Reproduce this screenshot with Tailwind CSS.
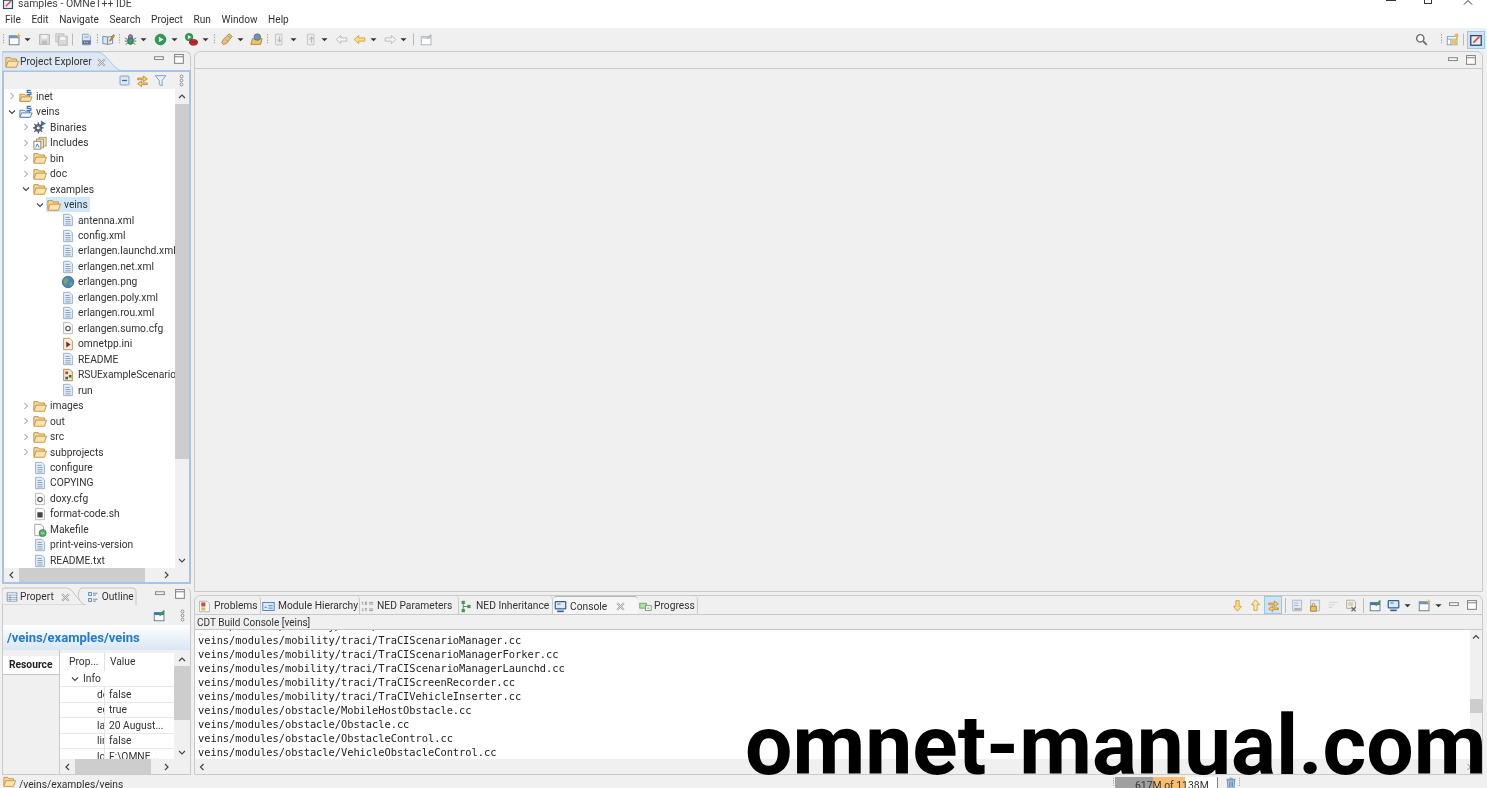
<!DOCTYPE html>
<html lang="en">
  <head>
    <meta charset="UTF-8" />
    <script src="https://cdn.jsdelivr.net/npm/@tailwindcss/browser@4"></script>
    <title>samples - OMNeT++ IDE</title>
  </head>
  <body class="w-[1487px] h-[788px] overflow-hidden bg-[#f0f0f0] font-['Roboto',sans-serif] text-[10.25px] text-[#333] relative blur-[0.35px]">
    <!-- icon sheet -->
    <svg class="hidden">
      <symbol id="folder" viewBox="0 0 16 16"><path d="M1 13V3h5l1 1.500h6V7" fill="#f8d795" stroke="#bb8838"/><path d="M1 14l2.500-7H15.500L13 14z" fill="#fce3ad" stroke="#c28c35"/></symbol>
      <symbol id="project" viewBox="0 0 16 16"><path d="M1 14V6h5l1 1h5v7z" fill="#f8d795" stroke="#bb8838"/><path d="M1 14l2-5h12l-2 5z" fill="#fce3ad" stroke="#c28c35"/><path d="M13.500 1.500H9.500v2.500h4v2.500H9" fill="none" stroke="#3d79c2" stroke-width="1.500"/></symbol>
      <symbol id="projopen" viewBox="0 0 16 16"><path d="M1 14V6h5l1 1h5v7z" fill="#dfe9f5" stroke="#4f7bab"/><path d="M1 14l2-5h12l-2 5z" fill="#f2f6fb" stroke="#4f7bab"/><path d="M13.500 1.500H9.500v2.500h4v2.500H9" fill="none" stroke="#3d79c2" stroke-width="1.500"/></symbol>
      <symbol id="binaries" viewBox="0 0 16 16"><path d="M9 0.500l6 3.500-6 3.500z" fill="#3f7cc4"/><circle cx="6" cy="9" r="4" fill="#8d9aa8" stroke="#4a5662"/><path d="M6 2.500v13M0 9h12M1.500 4.500l9 9M10.500 4.500l-9 9" stroke="#4a5662" stroke-width="1.300"/><circle cx="6" cy="9" r="1.700" fill="#fff"/></symbol>
      <symbol id="includes" viewBox="0 0 16 16"><rect x="7" y="1.500" width="8" height="10" fill="#efe2c4" stroke="#a4925f"/><rect x="4" y="3.500" width="8" height="10" fill="#efe2c4" stroke="#a4925f"/><rect x="1" y="6" width="8" height="9" fill="#fff" stroke="#7e7e6e"/><path d="M3 13l2-4 2 4" fill="none" stroke="#2f6cb8"/></symbol>
      <symbol id="file" viewBox="0 0 16 16"><path d="M3 1.500h7l3 3v10H3z" fill="#e9f0f9" stroke="#8ea7c6"/><path d="M5 5h5M5 7.500h6M5 10h6M5 12.500h6" stroke="#6f92bd"/></symbol>
      <symbol id="cfg" viewBox="0 0 16 16"><path d="M3 1.500h7l3 3v10H3z" fill="#fbfbfb" stroke="#b0b0b0"/><circle cx="8" cy="8.500" r="2.500" fill="#fff" stroke="#555" stroke-width="1.400"/></symbol>
      <symbol id="globe" viewBox="0 0 16 16"><circle cx="8" cy="8" r="6.500" fill="#4c86b8" stroke="#3a6a92"/><path d="M3 6c2-3 4-3 5-1s-1 3-2 5-3 0-3-4zM10 9c2-1 3 0 3 1s-2 3-3 2z" fill="#7fa565"/></symbol>
      <symbol id="ini" viewBox="0 0 16 16"><path d="M3 1.500h7l3 3v10H3z" fill="#fbf1d8" stroke="#b08f50"/><path d="M6 5l5 3.500L6 12z" fill="#8a1f2a"/></symbol>
      <symbol id="ned" viewBox="0 0 16 16"><path d="M3 1.500h7l3 3v10H3z" fill="#f7e6c4" stroke="#a5854a"/><rect x="5" y="4" width="3" height="3" fill="#c33"/><rect x="9" y="8" width="3" height="3" fill="#2c7a3c"/><rect x="5" y="10" width="3" height="3" fill="#2a5ba5"/></symbol>
      <symbol id="sh" viewBox="0 0 16 16"><path d="M3 1.500h8l2 2v11H3z" fill="#fff" stroke="#b0b0b0"/><rect x="5" y="6" width="6" height="6" fill="#444"/></symbol>
      <symbol id="make" viewBox="0 0 16 16"><path d="M2 1.500h7l3 3v10H2z" fill="#fff" stroke="#9a9a9a"/><circle cx="11" cy="11.500" r="4" fill="#5cae6c" stroke="#3f7f4d"/><path d="M9 11.500h4" stroke="#d9f0dd"/></symbol>
      <symbol id="chevr" viewBox="0 0 8 8"><path d="M2.500 1l3 3-3 3" fill="none" stroke="#8a8a8a"/></symbol>
      <symbol id="chevd" viewBox="0 0 8 8"><path d="M1 2.500l3 3 3-3" fill="none" stroke="#444" stroke-width="1.100"/></symbol>
      <symbol id="chevu" viewBox="0 0 8 8"><path d="M1 5.500l3-3 3 3" fill="none" stroke="#444" stroke-width="1.200"/></symbol>
      <symbol id="chevl" viewBox="0 0 8 8"><path d="M5.500 1l-3 3 3 3" fill="none" stroke="#444" stroke-width="1.200"/></symbol>
      <symbol id="chevrd" viewBox="0 0 8 8"><path d="M2.500 1l3 3-3 3" fill="none" stroke="#444" stroke-width="1.200"/></symbol>
      <symbol id="arrow" viewBox="0 0 8 8"><path d="M0.500 2.500h7L4 6z" fill="#333"/></symbol>
      <symbol id="grip" viewBox="0 0 4 16"><path d="M2 1v14" stroke="#9a9a9a" stroke-width="1.500" stroke-dasharray="1.500 2"/></symbol>
      <symbol id="sep" viewBox="0 0 4 16"><path d="M2 0v16" stroke="#a8a8a8"/></symbol>
      <symbol id="newf" viewBox="0 0 16 16"><rect x="1.500" y="3.500" width="12" height="11" fill="#fff" stroke="#44698f"/><rect x="1.500" y="3.500" width="12" height="3" fill="#6f95bf"/><path d="M13 0l1 2 2 1-2 1-1 2-1-2-2-1 2-1z" fill="#e9b84b"/></symbol>
      <symbol id="save" viewBox="0 0 16 16"><rect x="2" y="2" width="12" height="12" fill="#d8d8d8" stroke="#b2b2b2"/><rect x="4.500" y="2.500" width="7" height="4.500" fill="#f4f4f4"/><rect x="5" y="9.500" width="6" height="4" fill="#bdbdbd"/></symbol>
      <symbol id="saveall" viewBox="0 0 16 16"><rect x="1" y="1" width="10" height="10" fill="#ddd" stroke="#b8b8b8"/><rect x="4" y="4" width="11" height="11" fill="#d8d8d8" stroke="#b2b2b2"/><rect x="6.500" y="4.500" width="6" height="4" fill="#f4f4f4"/></symbol>
      <symbol id="print" viewBox="0 0 16 16"><path d="M3 1.500h7l3 3v10H3z" fill="#dfe7f2" stroke="#7e94b4"/><rect x="3" y="9" width="10" height="5" fill="#5a7498"/><path d="M5 5h6" stroke="#7e94b4"/><path d="M5 11.500h6" stroke="#fff" stroke-dasharray="1 1"/></symbol>
      <symbol id="book" viewBox="0 0 16 16"><path d="M1 4l6 1v9l-6-1z" fill="#dbe6f2" stroke="#5d7ea5"/><path d="M7 5l6-1v9l-6 1z" fill="#eef3f9" stroke="#5d7ea5"/><path d="M10 8l4-6 1.500 1-4 6-2 1z" fill="#d9a441" stroke="#8c6a25"/></symbol>
      <symbol id="bug" viewBox="0 0 16 16"><ellipse cx="8" cy="9.500" rx="3.500" ry="4.500" fill="#3d9a6a" stroke="#24613f"/><circle cx="8" cy="4.500" r="2.500" fill="#8f7ab5" stroke="#5f4f85"/><path d="M1 6l3 2M15 6l-3 2M1 10h3M15 10h-3M2 14l3-2M14 14l-3-2" stroke="#3a5f4a"/></symbol>
      <symbol id="run" viewBox="0 0 16 16"><circle cx="8" cy="8" r="6.500" fill="#2f9e50" stroke="#1d7a3a"/><path d="M6 4.500l5.500 3.500L6 11.500z" fill="#fff"/></symbol>
      <symbol id="runext" viewBox="0 0 16 16"><circle cx="5" cy="5" r="4.500" fill="#2f9e50" stroke="#1d7a3a"/><path d="M3.500 2.500l4 2.500-4 2.500z" fill="#fff"/><ellipse cx="10.500" cy="11.500" rx="5" ry="3.500" fill="#c62b2b" stroke="#8a1f1f"/><path d="M7 11h7" stroke="#500" stroke-dasharray="1 1"/></symbol>
      <symbol id="brush" viewBox="0 0 16 16"><path d="M11 1l4 3-7 9-4 1-2-2 2-4z" fill="#ecc27a" stroke="#a67c34"/><path d="M10 4l3 2M7 8l3 2" stroke="#7f8fa6"/></symbol>
      <symbol id="openr" viewBox="0 0 16 16"><path d="M1 14l2-7h12l-2 7z" fill="#f0c365" stroke="#a77d2d"/><circle cx="9" cy="5" r="4" fill="#7a8fb8" stroke="#566b94"/><circle cx="12" cy="6" r="1.500" fill="#5ba05b"/></symbol>
      <symbol id="nextann" viewBox="0 0 16 16"><path d="M3 1.500h8v13H3z" fill="#ececec" stroke="#bdbdbd"/><path d="M8 4v6M5.500 8L8 11l2.500-3" fill="none" stroke="#b8b8b8" stroke-width="1.300"/></symbol>
      <symbol id="prevann" viewBox="0 0 16 16"><path d="M3 1.500h8v13H3z" fill="#ececec" stroke="#bdbdbd"/><path d="M8 12V6M5.500 8L8 5l2.500 3" fill="none" stroke="#b8b8b8" stroke-width="1.300"/></symbol>
      <symbol id="backg" viewBox="0 0 16 16"><path d="M1.500 8L7 3v3h7.500v4H7v3z" fill="#f4f4f4" stroke="#b4b4b4"/></symbol>
      <symbol id="lefto" viewBox="0 0 16 16"><path d="M1.500 8L7 3v3h7.500v4H7v3z" fill="#fbdc8e" stroke="#cf9a2f"/></symbol>
      <symbol id="rightg" viewBox="0 0 16 16"><path d="M14.500 8L9 3v3H1.500v4H9v3z" fill="#f4f4f4" stroke="#b4b4b4"/></symbol>
      <symbol id="pin" viewBox="0 0 16 16"><rect x="1.500" y="4.500" width="12" height="10" fill="#fff" stroke="#9aa4b0"/><rect x="1.500" y="4.500" width="12" height="2.500" fill="#c8ccd2"/><path d="M9 7l5-5" stroke="#b8b8b8" stroke-width="2"/></symbol>
      <symbol id="pinb" viewBox="0 0 16 16"><rect x="1.500" y="4.500" width="12" height="10" fill="#fff" stroke="#44698f"/><rect x="1.500" y="4.500" width="12" height="3" fill="#3f74ad"/><path d="M8 8l6-6" stroke="#3f9a4f" stroke-width="2.200"/></symbol>
      <symbol id="search" viewBox="0 0 16 16"><circle cx="6.500" cy="6.500" r="4.500" fill="#fff" stroke="#6b6b6b" stroke-width="1.700"/><path d="M10 10l4.500 4.500" stroke="#6b6b6b" stroke-width="2.200"/></symbol>
      <symbol id="persp" viewBox="0 0 16 16"><rect x="1.500" y="4.500" width="12" height="10" fill="#fff" stroke="#6f8fb3"/><path d="M1.500 7.500h12M6 7.500v7" stroke="#6f8fb3"/><rect x="6.500" y="8" width="7" height="6" fill="#eac36e"/><circle cx="13" cy="3" r="2.500" fill="#e9b84b"/></symbol>
      <symbol id="omnet" viewBox="0 0 16 16"><rect x="2" y="3" width="12" height="11" fill="#e8eef6" stroke="#2f4a6d" stroke-width="1.500"/><path d="M5 11l7-7" stroke="#df4a32" stroke-width="2"/></symbol>
      <symbol id="collapse" viewBox="0 0 16 16"><rect x="2.500" y="2.500" width="11" height="11" rx="1" fill="#dbe7f5" stroke="#6b93c0"/><path d="M5 8h6" stroke="#34659c" stroke-width="1.500"/></symbol>
      <symbol id="link" viewBox="0 0 16 16"><path d="M2 5h7V2.500L14 6l-5 3.500V7H2z" fill="#f5cd72" stroke="#bd8a25"/><path d="M14 11H7V8.500L2 12l5 3.500V13h7z" fill="#f5cd72" stroke="#bd8a25"/></symbol>
      <symbol id="filter" viewBox="0 0 16 16"><path d="M1.500 2h13L10 8v6.500L6.500 13V8z" fill="#e6f0fa" stroke="#6b93c0"/></symbol>
      <symbol id="dots" viewBox="0 0 6 16"><circle cx="3" cy="3" r="1.700" fill="#fff" stroke="#777"/><circle cx="3" cy="8" r="1.700" fill="#fff" stroke="#777"/><circle cx="3" cy="13" r="1.700" fill="#fff" stroke="#777"/></symbol>
      <symbol id="min" viewBox="0 0 10 10"><rect x="0.500" y="2.500" width="8" height="2.500" fill="#fff" stroke="#8a8a8a"/></symbol>
      <symbol id="max" viewBox="0 0 10 10"><rect x="0.500" y="0.500" width="8" height="8" fill="#fff" stroke="#8a8a8a"/><path d="M0.500 2.500h8" stroke="#8a8a8a"/></symbol>
      <symbol id="close" viewBox="0 0 8 8"><path d="M1 1l6 6M7 1L1 7" stroke="#9a9a9a" stroke-width="1.800"/><path d="M1 1l6 6M7 1L1 7" stroke="#fff" stroke-width="0.600"/></symbol>
      <symbol id="table" viewBox="0 0 16 16"><rect x="1.500" y="2.500" width="13" height="11" fill="#fff" stroke="#6b89ab"/><path d="M1.500 5.500h13M5.500 5.500v8M1.500 8.500h13M1.500 11h13" stroke="#6b89ab"/></symbol>
      <symbol id="outline" viewBox="0 0 16 16"><path d="M2 2h4v4H2zM2 10h4v4H2z" fill="#dce8f5" stroke="#3b73b3"/><path d="M8 3h6M8 5.500h4M8 11h6M8 13.500h4" stroke="#3b73b3"/></symbol>
      <symbol id="problems" viewBox="0 0 16 16"><path d="M2 1.500h9l3 3v10H2z" fill="#fff" stroke="#a5a5a5"/><rect x="4" y="3" width="5" height="5" fill="#d9483b"/><rect x="4" y="9" width="5" height="4" fill="#e9b84b"/></symbol>
      <symbol id="hier" viewBox="0 0 16 16"><rect x="1" y="3" width="14" height="10" fill="#dbe8f5" stroke="#3b73b3"/><path d="M3 9h3M8 7h5M8 10h5" stroke="#3b73b3"/></symbol>
      <symbol id="nedpar" viewBox="0 0 16 16"><path d="M1 3h2M1 5h2M5 2l2 4M7 2L5 6M1 11h2M1 13h2M5 10l1 2 1-2M6 12v2M10 3h5M10 5h5M10 11h5M10 13h5" fill="none" stroke="#8a8a8a"/></symbol>
      <symbol id="inherit" viewBox="0 0 16 16"><rect x="2" y="1" width="4" height="4" fill="#3f9a4f"/><rect x="9" y="6" width="4" height="4" fill="#3f9a4f"/><rect x="2" y="11" width="4" height="4" fill="#3f9a4f"/><path d="M4 5v6M4 8h5" stroke="#3f7a4f"/></symbol>
      <symbol id="console" viewBox="0 0 16 16"><rect x="1.500" y="2" width="13" height="9" rx="1" fill="#dfe9f5" stroke="#2e5f9a" stroke-width="1.500"/><path d="M4 14h8" stroke="#2e5f9a" stroke-width="2"/><path d="M4 5h4" stroke="#2e5f9a"/></symbol>
      <symbol id="progress" viewBox="0 0 16 16"><rect x="1" y="4" width="8" height="6" fill="#b9dbb4" stroke="#5c9a55"/><rect x="8" y="7" width="7" height="6" fill="#fff" stroke="#5c9a55"/><path d="M10 10h3" stroke="#5c9a55"/></symbol>
      <symbol id="downo" viewBox="0 0 16 16"><path d="M8 15L3 9h3V2h4v7h3z" fill="#fbdc8e" stroke="#cf9a2f"/></symbol>
      <symbol id="upo" viewBox="0 0 16 16"><path d="M8 1L3 7h3v7h4V7h3z" fill="#fde8b0" stroke="#cf9a2f"/></symbol>
      <symbol id="clear" viewBox="0 0 16 16"><path d="M2 1.500h11v13H2z" fill="#e3eaf3" stroke="#a4b3c6"/><path d="M4 5h5M4 8h5" stroke="#98a9bf"/><path d="M4 11h8v3H4z" fill="#aab3bf"/></symbol>
      <symbol id="lock" viewBox="0 0 16 16"><path d="M2 1.500h11v13H2z" fill="#e3eaf3" stroke="#a4b3c6"/><rect x="2" y="9" width="7" height="6" fill="#e8c06c" stroke="#a87f2c"/><path d="M4 9V7a1.500 1.500 0 0 1 3 0v2" fill="none" stroke="#a87f2c"/></symbol>
      <symbol id="wrap" viewBox="0 0 16 16"><path d="M2 4h12M2 7h8M2 10h5" stroke="#d0d5dc" stroke-width="1.300"/></symbol>
      <symbol id="rem" viewBox="0 0 16 16"><path d="M2 1.500h9l2 2v8H2z" fill="#f4efe0" stroke="#a4a08e"/><path d="M4 5h6M4 7.500h6" stroke="#a4a08e"/><path d="M8 10l5 5M13 10l-5 5" stroke="#666" stroke-width="1.600"/></symbol>
      <symbol id="trash" viewBox="0 0 16 16"><path d="M3 4h10l-1 11H4z" fill="#b9cde6" stroke="#4c78ad"/><path d="M2 3h12M6 1.500h4M6 6v7M8 6v7M10 6v7" stroke="#4c78ad"/></symbol>
    </svg>

    <!-- title bar and menu -->
    <div class="h-[7px] flex items-center pl-[2px] bg-white">
      <svg class="w-[12px] h-[12px] shrink-0"><use href="#omnet" /></svg>
      <span class="ml-[4px] text-[10.5px] text-[#444] whitespace-nowrap">samples - OMNeT++ IDE</span>
      <span class="absolute left-[1386px] top-0 w-[10px] h-px bg-[#333]"></span>
      <span class="absolute left-[1424px] top-0 w-[8px] h-[4px] border-x border-b border-[#333]"></span>
      <svg class="absolute left-[1463px] top-0 w-[10px] h-[5px]" viewBox="0 0 10 5"><path d="M1 4.500L5 0.500 9 4.500" fill="none" stroke="#333"/></svg>
    </div>
    <div class="h-[21px] pt-[5px] bg-white flex items-center pl-[5px] gap-[10.6px] text-[10.1px] text-[#333]">
      <span>File</span><span>Edit</span><span>Navigate</span><span>Search</span><span>Project</span><span>Run</span><span>Window</span><span>Help</span>
    </div>

    <!-- main toolbar -->
    <div id="toolbar" class="h-[23px] flex items-center"></div>

    <div class="flex h-[724px]">
      <!-- left column -->
      <div class="w-[194px] shrink-0 pl-[2px] pr-[3px] flex flex-col gap-[3px]">
        <!-- project explorer -->
        <section class="h-[533px] flex flex-col">
          <div class="h-[19px] relative flex items-center pt-[2px] rounded-tr-[6px] border-t border-r border-[#c9c9c9]">
            <svg class="absolute left-0 top-[-1px] w-[122px] h-[20px]" viewBox="0 0 122 20"><path d="M0 20V4Q0 1 3 1H95Q100 1 104 6L112 15Q116 20 122 20Z" fill="#dde8f4" stroke="#a9c4e3"/></svg>
            <svg class="relative ml-[3px] w-[14px] h-[14px]"><use href="#folder" /></svg>
            <span class="relative ml-[1px] text-[10.2px]">Project Explorer</span>
            <svg class="relative ml-[5px] w-[9px] h-[9px]"><use href="#close" /></svg>
            <svg class="absolute left-[152px] top-[2px] w-[11px] h-[11px]"><use href="#min" /></svg>
            <svg class="absolute left-[172px] top-[2px] w-[11px] h-[11px]"><use href="#max" /></svg>
          </div>
          <div class="flex-1 min-h-0 border-2 border-[#a9c4e3] flex flex-col">
            <div class="h-[17px] shrink-0 flex items-center justify-end pr-[5px]">
              <svg class="w-[13px] h-[13px] mr-[5px]"><use href="#collapse" /></svg>
              <svg class="w-[13px] h-[13px] mr-[5px]"><use href="#link" /></svg>
              <svg class="w-[13px] h-[13px] mr-[12px]"><use href="#filter" /></svg>
              <svg class="w-[5px] h-[13px]"><use href="#dots" /></svg>
            </div>
            <div class="flex-1 min-h-0 flex">
              <div class="w-[171px] bg-white overflow-hidden whitespace-nowrap">
                <div id="tree" class="mt-[-0.3px]"></div>
              </div>
              <div class="flex-1 flex flex-col items-center">
                <svg class="h-[15px] w-[8px]"><use href="#chevu" /></svg>
                <div class="w-full h-[355px] bg-[#cdcdcd]"></div>
                <svg class="mt-auto h-[15px] w-[8px]"><use href="#chevd" /></svg>
              </div>
            </div>
            <div class="h-[14px] shrink-0 flex items-center">
              <svg class="w-[15px] h-[8px]"><use href="#chevl" /></svg>
              <div class="w-[126px] h-full bg-[#cdcdcd]"></div>
              <svg class="ml-[14px] w-[15px] h-[8px]"><use href="#chevrd" /></svg>
            </div>
          </div>
        </section>

        <!-- properties -->
        <section class="h-[188px] flex flex-col border border-t-0 border-[#c9c9c9] rounded-t-[6px]">
          <div class="h-[18px] shrink-0 relative flex items-center pt-[2px]">
            <svg class="absolute left-[-1px] top-0 w-[140px] h-[18px]" viewBox="0 0 140 18"><path d="M0 18V3Q0 1 3 1H64Q68 1 71 5L78 14Q81 18 84 18Z" fill="#f0f0f0" stroke="#c4c4c4"/><path d="M78 14Q74 7 79 1H130Q134 1 134 4V18" fill="#f0f0f0" stroke="#c4c4c4"/></svg>
            <svg class="relative ml-[3px] w-[12px] h-[12px]"><use href="#table" /></svg>
            <span class="relative ml-[2px] text-[10.2px]">Propert</span>
            <svg class="relative ml-[7px] w-[9px] h-[9px]"><use href="#close" /></svg>
            <svg class="relative ml-[17px] w-[12px] h-[12px]"><use href="#outline" /></svg>
            <span class="relative ml-[3px] text-[10.2px]">Outline</span>
            <svg class="absolute left-[152px] top-[2px] w-[11px] h-[11px]"><use href="#min" /></svg>
            <svg class="absolute left-[172px] top-[2px] w-[11px] h-[11px]"><use href="#max" /></svg>
          </div>
          <div class="h-[20px] shrink-0 flex items-center justify-end pr-[5px]">
            <svg class="w-[13px] h-[13px] mr-[14px]"><use href="#pinb" /></svg>
            <svg class="w-[5px] h-[13px]"><use href="#dots" /></svg>
          </div>
          <div class="h-[25px] shrink-0 bg-gradient-to-b from-white to-[#d9e6f3] flex items-center pl-[4px] text-[13px] font-bold text-[#1f7ad1]">/veins/examples/veins</div>
          <div class="flex-1 min-h-0 flex">
            <div class="w-[57px] shrink-0 border-r border-[#c9c9c9]">
              <div class="mt-[6px] h-[19px] bg-white border-b border-[#c9c9c9] flex items-center pl-[6px] font-bold text-[10.25px] text-[#222]">Resource</div>
            </div>
            <div class="flex-1 min-w-0 flex flex-col pt-[3px]">
              <div class="flex-1 min-h-0 flex">
                <div class="w-[114px] bg-white overflow-hidden">
                  <div class="h-[18px] flex items-center"><span class="w-[45px] pl-[9px] border-r border-[#e3e3e3] h-full flex items-center">Prop...</span><span class="pl-[5px]">Value</span></div>
                  <div class="h-[15px] flex items-center pl-[11px]"><svg class="w-[8px] h-[8px]"><use href="#chevd" /></svg><span class="ml-[4px]">Info</span></div>
                  <div class="h-[15.5px] flex items-center border-t border-[#e8e8e8]"><span class="w-[45px] pl-[37px] h-full border-r border-[#e3e3e3] overflow-hidden flex items-center">de</span><span class="pl-[4px]">false</span></div>
                  <div class="h-[15.5px] flex items-center border-t border-[#e8e8e8]"><span class="w-[45px] pl-[37px] h-full border-r border-[#e3e3e3] overflow-hidden flex items-center">ed</span><span class="pl-[4px]">true</span></div>
                  <div class="h-[15.5px] flex items-center border-t border-[#e8e8e8]"><span class="w-[45px] pl-[37px] h-full border-r border-[#e3e3e3] overflow-hidden flex items-center">la</span><span class="pl-[4px]">20 August...</span></div>
                  <div class="h-[15.5px] flex items-center border-t border-[#e8e8e8]"><span class="w-[45px] pl-[37px] h-full border-r border-[#e3e3e3] overflow-hidden flex items-center">lin</span><span class="pl-[4px]">false</span></div>
                  <div class="h-[15.5px] flex items-center border-t border-[#e8e8e8]"><span class="w-[45px] pl-[37px] h-full border-r border-[#e3e3e3] overflow-hidden flex items-center">lo</span><span class="pl-[4px]">F:\OMNE...</span></div>
                </div>
                <div class="flex-1 flex flex-col items-center">
                  <svg class="h-[13px] w-[8px]"><use href="#chevu" /></svg>
                  <div class="w-full h-[54px] bg-[#cdcdcd]"></div>
                  <svg class="mt-auto h-[13px] w-[8px]"><use href="#chevd" /></svg>
                </div>
              </div>
              <div class="h-[15px] shrink-0 flex items-center">
                <svg class="w-[15px] h-[8px]"><use href="#chevl" /></svg>
                <div class="w-[76px] h-full bg-[#cdcdcd]"></div>
                <svg class="ml-[8px] w-[15px] h-[8px]"><use href="#chevrd" /></svg>
              </div>
            </div>
          </div>
        </section>
      </div>

      <!-- right column -->
      <div class="w-[1289px] shrink-0 flex flex-col gap-[3px]">
        <!-- editor area -->
        <section class="h-[541px] border border-[#c9c9c9] rounded-t-[6px] flex flex-col">
          <div class="h-[17px] shrink-0 border-b border-[#c9c9c9] flex items-center justify-end pr-[5px]">
            <svg class="w-[11px] h-[11px] mr-[7px]"><use href="#min" /></svg>
            <svg class="w-[11px] h-[11px]"><use href="#max" /></svg>
          </div>
        </section>

        <!-- console -->
        <section class="h-[180px] border border-[#c9c9c9] rounded-t-[6px] flex flex-col">
          <div id="consoleTabs" class="h-[18px] shrink-0 flex items-center relative"></div>
          <div class="h-[16px] shrink-0 border-y border-[#c9c9c9] flex items-center pl-[2px] text-[10px]">CDT Build Console [veins]</div>
          <div class="flex-1 min-h-0 flex">
            <div class="w-[1275px] bg-white overflow-hidden pl-[3px] font-['DejaVu_Sans_Mono',monospace] text-[10.4px] tracking-[-0.04px] leading-[14px] text-[#222]">
              <div class="mt-[-11px]">veins/modules/mobility/traci/TraCICommandInterface.cc</div>
              <div>veins/modules/mobility/traci/TraCIScenarioManager.cc</div>
              <div>veins/modules/mobility/traci/TraCIScenarioManagerForker.cc</div>
              <div>veins/modules/mobility/traci/TraCIScenarioManagerLaunchd.cc</div>
              <div>veins/modules/mobility/traci/TraCIScreenRecorder.cc</div>
              <div>veins/modules/mobility/traci/TraCIVehicleInserter.cc</div>
              <div>veins/modules/obstacle/MobileHostObstacle.cc</div>
              <div>veins/modules/obstacle/Obstacle.cc</div>
              <div>veins/modules/obstacle/ObstacleControl.cc</div>
              <div>veins/modules/obstacle/VehicleObstacleControl.cc</div>
            </div>
            <div class="flex-1 flex flex-col items-center">
              <svg class="h-[14px] w-[8px]"><use href="#chevu" /></svg>
              <div class="mt-[55px] w-full h-[14px] bg-[#cdcdcd]"></div>
              <svg class="mt-auto h-[14px] w-[8px]"><use href="#chevd" /></svg>
            </div>
          </div>
          <div class="h-[15px] shrink-0 flex items-center justify-between px-[3px]">
            <svg class="w-[8px] h-[8px]"><use href="#chevl" /></svg>
            <svg class="w-[8px] h-[8px] mr-[6px]"><use href="#chevr" /></svg>
          </div>
        </section>
      </div>
    </div>

    <!-- status bar -->
    <div class="h-[13px] flex items-center relative">
      <svg class="ml-[3px] w-[13px] h-[13px] shrink-0"><use href="#folder" /></svg>
      <span class="ml-[3px] leading-[13px] pt-[5px]">/veins/examples/veins</span>
      <div class="absolute left-[1112px] top-[2px] flex items-start h-[11px]">
        <svg class="w-[3px] h-[11px]"><use href="#grip" /></svg>
        <div class="w-[103px] h-[11px] flex bg-white border-r border-[#c66] relative">
          <div class="w-[38px] bg-[#a0a0a0]"></div>
          <div class="w-[32px] bg-[#f9bd70]"></div>
          <span class="absolute left-[20px] top-[2px] text-[10.4px] leading-[13px] whitespace-nowrap">617M of 1138M</span>
        </div>
        <svg class="ml-[7px] w-[12px] h-[12px]"><use href="#trash" /></svg>
        <svg class="ml-[1px] w-[3px] h-[11px]"><use href="#grip" /></svg>
      </div>
    </div>

    <!-- watermark laid over the window -->
    <div class="absolute left-[745px] top-[696px] font-['Roboto',sans-serif] font-bold text-[84px] leading-[100px] text-black whitespace-nowrap">omnet-manual.com</div>

    <script>
      const use = (name, size) =>
        `<svg class="${size} shrink-0"><use href="#${name}" /></svg>`;
      const slot = (name, box, size) =>
        `<span class="${box} flex justify-center shrink-0">${use(name, size)}</span>`;
      const icon = (name) => slot(name, "w-[16px]", "w-[13px] h-[13px]");
      const small = (name) => slot(name, "w-[18px]", "w-[13px] h-[13px]");
      const arrow = () => slot("arrow", "w-[11px]", "w-[7px] h-[7px]");
      const grip = () => slot("grip", "w-[6px]", "w-[3px] h-[15px]");
      const sep = () => slot("sep", "w-[6px]", "w-[3px] h-[17px]");
      const gap1 = '<span class="w-px shrink-0"></span>';
      const gap2 = '<span class="w-[2px] shrink-0"></span>';
      const gap3 = '<span class="w-[3px] shrink-0"></span>';
      const gap4 = '<span class="w-[4px] shrink-0"></span>';

      document.getElementById("toolbar").innerHTML = [
        grip(), icon("newf"), arrow(), gap3, icon("save"), gap1, icon("saveall"), sep(),
        gap3, icon("print"), grip(), icon("book"), grip(), icon("bug"), arrow(), gap3,
        icon("run"), gap1, arrow(), gap3, icon("runext"), gap1, arrow(), grip(), gap1,
        icon("brush"), gap1, arrow(), gap2, icon("openr"), grip(), gap1, icon("nextann"),
        gap1, arrow(), gap4, icon("prevann"), arrow(), gap3, icon("backg"), gap2,
        icon("lefto"), gap1, arrow(), gap3, icon("rightg"), arrow(), gap1, sep(), gap2,
        icon("pin"),
        '<span class="ml-auto"></span>',
        icon("search"), '<span class="w-[9px] shrink-0"></span>', grip(), icon("persp"), sep(), gap2,
        '<span class="ml-[-1px] mr-[2px] w-[18px] h-[18px] bg-[#cfe3f7] border border-[#9cc6ea] flex items-center justify-center">' +
          use("omnet", "w-[14px] h-[14px]") + "</span>",
      ].join("");

      const rows = [
        [0, "r", "project", "inet"],
        [0, "d", "projopen", "veins"],
        [1, "r", "binaries", "Binaries"],
        [1, "r", "includes", "Includes"],
        [1, "r", "folder", "bin"],
        [1, "r", "folder", "doc"],
        [1, "d", "folder", "examples"],
        [2, "d", "folder", "veins", true],
        [3, "", "file", "antenna.xml"],
        [3, "", "file", "config.xml"],
        [3, "", "file", "erlangen.launchd.xml"],
        [3, "", "file", "erlangen.net.xml"],
        [3, "", "globe", "erlangen.png"],
        [3, "", "file", "erlangen.poly.xml"],
        [3, "", "file", "erlangen.rou.xml"],
        [3, "", "cfg", "erlangen.sumo.cfg"],
        [3, "", "ini", "omnetpp.ini"],
        [3, "", "file", "README"],
        [3, "", "ned", "RSUExampleScenario"],
        [3, "", "file", "run"],
        [1, "r", "folder", "images"],
        [1, "r", "folder", "out"],
        [1, "r", "folder", "src"],
        [1, "r", "folder", "subprojects"],
        [1, "", "file", "configure"],
        [1, "", "file", "COPYING"],
        [1, "", "cfg", "doxy.cfg"],
        [1, "", "sh", "format-code.sh"],
        [1, "", "make", "Makefile"],
        [1, "", "file", "print-veins-version"],
        [1, "", "file", "README.txt"],
      ];
      const indent = ["pl-[4px]", "pl-[18px]", "pl-[32px]", "pl-[46px]"];
      document.getElementById("tree").innerHTML = rows
        .map(([level, chev, name, label, selected]) => {
          const chevron = chev
            ? use(chev === "d" ? "chevd" : "chevr", "w-[8px] h-[8px]")
            : '<span class="w-[8px] shrink-0"></span>';
          const body = `${use(name, "w-[14px] h-[14px]")}<span class="ml-[3px]">${label}</span>`;
          return `<div class="h-[15.47px] flex items-center ${indent[level]}">
            ${chevron}
            ${selected
              ? `<span class="ml-[2px] pl-[1px] pr-[2px] h-[15px] flex items-center bg-[#d1e8fa]">${body}</span>`
              : `<span class="w-[3px] shrink-0"></span>${body}`}
          </div>`;
        })
        .join("");

      const tabs = [
        ["w-[64px]", "problems", "Problems"],
        ["w-[99px]", "hier", "Module Hierarchy"],
        ["w-[99px]", "nedpar", "NED Parameters"],
        ["w-[94px]", "inherit", "NED Inheritance"],
      ];
      const tabHtml = tabs
        .map(([w, name, label]) =>
          `<div class="${w} shrink-0 h-full flex items-center pl-[1px] pt-[2px] border-r border-[#c9c9c9] rounded-tr-[4px]">
            ${use(name, "w-[13px] h-[13px]")}<span class="ml-[3px] whitespace-nowrap">${label}</span>
          </div>`)
        .join("");
      const tools = [
        small("downo"), small("upo"),
        slot("link", "w-[18px] h-[18px] items-center bg-[#cfe3f7] border border-[#9cc6ea]", "w-[13px] h-[13px]"),
        '<span class="w-[6px] shrink-0 flex justify-center"><span class="w-px h-[15px] bg-[#bbb]"></span></span>',
        small("clear"), small("lock"), small("wrap"), small("rem"),
        '<span class="w-[6px] shrink-0 flex justify-center"><span class="w-px h-[15px] bg-[#bbb]"></span></span>',
        small("pinb"), small("console"), arrow(), '<span class="w-[2px] shrink-0"></span>',
        small("newf"), arrow(), '<span class="w-px shrink-0"></span>',
        slot("min", "w-[18px]", "w-[11px] h-[11px]"), slot("max", "w-[18px]", "w-[11px] h-[11px]"),
      ].join("");
      document.getElementById("consoleTabs").innerHTML =
        `<span class="w-[2px] shrink-0"></span>${tabHtml}
        <div class="w-[85px] shrink-0 h-full flex items-center pl-[1px] pt-[2px] bg-white/40 border-t border-[#b5b5b5] rounded-t-[4px]">
          ${use("console", "w-[13px] h-[13px]")}<span class="ml-[3px]">Console</span>
          <svg class="ml-[9px] w-[9px] h-[9px]"><use href="#close" /></svg>
        </div>
        <div class="w-[60px] shrink-0 h-full flex items-center pl-[1px] pt-[2px] border-r border-[#c9c9c9] rounded-tr-[4px]">
          ${use("progress", "w-[13px] h-[13px]")}<span class="ml-[2px]">Progress</span>
        </div>
        <div class="ml-auto flex items-center pr-[1px]">${tools}</div>`;
    </script>
  </body>
</html>
